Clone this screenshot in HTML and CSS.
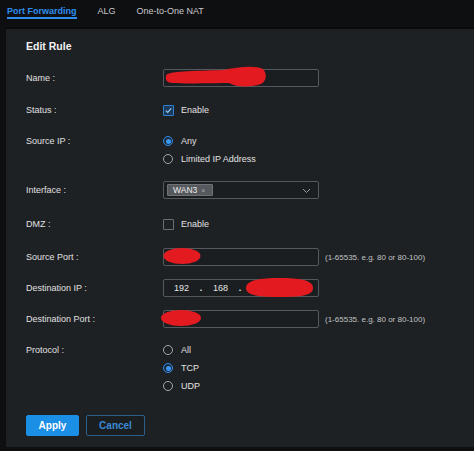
FILE: index.html
```html
<!DOCTYPE html>
<html>
<head>
<meta charset="utf-8">
<link rel="stylesheet" href="styles.css">
</head>
<body>
<nav class="tabs">
  <span class="tab active">Port Forwarding</span>
  <span class="tab">ALG</span>
  <span class="tab">One-to-One NAT</span>
</nav>
<section class="panel">
  <h1 class="title">Edit Rule</h1>
  <div class="form">
    <div class="row">
      <div class="label">Name :</div>
      <div class="field input">
        <svg class="redact" width="156" height="18" viewBox="0 0 156 18"><path d="M3 7 C3 2 30 2 60 1 C75 -2 92 -4 100 0 C104 4 104 12 98 15 C90 18 74 19 66 14 C50 14 25 15 10 14 C4 14 2 11 3 7Z" fill="#e31b20"/></svg>
      </div>
    </div>
    <div class="row row-status">
      <div class="label">Status :</div>
      <label class="opt"><span class="check on"><svg width="9" height="9" viewBox="0 0 9 9"><path d="M1.8 4.6 L3.7 6.4 L7.2 2.4" fill="none" stroke="#8fc6f6" stroke-width="1.3"/></svg></span>Enable</label>
    </div>
    <div class="row row-multi">
      <div class="label">Source IP :</div>
      <div class="opts">
        <label class="opt"><span class="radio on"></span>Any</label>
        <label class="opt"><span class="radio"></span>Limited IP Address</label>
      </div>
    </div>
    <div class="row">
      <div class="label">Interface :</div>
      <div class="field input select">
        <span class="tag">WAN3<span class="tag-x">×</span></span>
        <svg class="chev" width="9" height="6" viewBox="0 0 9 6"><path d="M1 1 L4.5 4.5 L8 1" fill="none" stroke="#9a9da1" stroke-width="1"/></svg>
      </div>
    </div>
    <div class="row row-dmz">
      <div class="label">DMZ :</div>
      <label class="opt"><span class="check"></span>Enable</label>
    </div>
    <div class="row row-sport">
      <div class="label">Source Port :</div>
      <div class="field input">
        <svg class="redact" width="156" height="18" viewBox="0 0 156 18"><ellipse cx="19" cy="8" rx="18.5" ry="8" fill="#e31b20"/></svg>
      </div>
      <div class="hint">(1-65535. e.g. 80 or 80-100)</div>
    </div>
    <div class="row">
      <div class="label">Destination IP :</div>
      <div class="field input ip">
        <span class="seg">192</span><span class="dot">.</span><span class="seg">168</span><span class="dot">.</span>
        <svg class="redact" width="156" height="18" viewBox="0 0 156 18"><path d="M83 9 C83 1 98 -1 116 -1 C136 -1 150 1 150 9 C150 17 136 18 116 18 C98 18 83 17 83 9Z" fill="#e31b20"/></svg>
      </div>
    </div>
    <div class="row">
      <div class="label">Destination Port :</div>
      <div class="field input">
        <svg class="redact" width="156" height="18" viewBox="0 0 156 18"><ellipse cx="18" cy="8" rx="20" ry="8" fill="#e31b20"/></svg>
      </div>
      <div class="hint">(1-65535. e.g. 80 or 80-100)</div>
    </div>
    <div class="row row-multi">
      <div class="label">Protocol :</div>
      <div class="opts">
        <label class="opt"><span class="radio"></span>All</label>
        <label class="opt"><span class="radio on"></span>TCP</label>
        <label class="opt"><span class="radio"></span>UDP</label>
      </div>
    </div>
    <div class="actions">
      <button class="btn primary">Apply</button>
      <button class="btn ghost">Cancel</button>
    </div>
  </div>
</section>
</body>
</html>
```

FILE: styles.css
```css
* { box-sizing: border-box; }
html, body { margin: 0; padding: 0; }
body {
  background: #0e0f11;
  font-family: "Liberation Sans", Arial, sans-serif;
  color: #dcdcdc;
  width: 474px;
  height: 451px;
  overflow: hidden;
}
.tabs {
  display: flex;
  gap: 21px;
  padding-left: 7px;
  height: 27px;
}
.tab {
  font-size: 9px;
  line-height: 11px;
  padding-top: 6px;
  height: 19px;
  color: #c9cacc;
  border-bottom: 2px solid transparent;
}
.tab.active {
  color: #2f8ff0;
  font-weight: bold;
  border-bottom-color: #2f8ff0;
}
.panel {
  margin-left: 6px;
  height: 420px;
  background: #1e2124;
  border-top: 2px solid #0a0b0c;
  padding: 10px 0 0 20px;
}
.title {
  margin: 0 0 16px 0;
  font-size: 10.5px;
  line-height: 14px;
  font-weight: bold;
  color: #f2f2f2;
}
.form {
  display: flex;
  flex-direction: column;
  gap: 13px;
}
.row {
  display: grid;
  grid-template-columns: 137px 156px auto;
  align-items: center;
  min-height: 18px;
}
.row-multi { align-items: start; }
.row-status { margin-top: 1px; }
.row-dmz { margin-top: 3px; }
.row-sport { margin-top: 2px; }
.label {
  font-size: 9px;
  line-height: 18px;
  color: #e0e0e0;
}
.field { position: relative; }
.input {
  height: 18px;
  border: 1px solid #55585d;
  border-radius: 2px;
  background: #1b1e21;
}
.redact {
  position: absolute;
  left: -1px;
  top: -1px;
  overflow: visible;
}
.hint {
  font-size: 8px;
  color: #c0c1c3;
  padding-left: 6px;
  white-space: nowrap;
}
.opts { display: flex; flex-direction: column; }
.opt {
  display: flex;
  align-items: center;
  height: 18px;
  font-size: 9px;
  color: #e2e2e2;
}
.check {
  width: 11px;
  height: 11px;
  border: 1px solid #6b6e72;
  border-radius: 1px;
  margin-right: 7px;
  display: flex;
  align-items: center;
  justify-content: center;
}
.check.on {
  border-color: #2f82d2;
  background: #1c3a57;
}
.radio {
  width: 10px;
  height: 10px;
  border-radius: 50%;
  border: 1px solid #a3a5a8;
  margin-right: 8px;
  display: flex;
  align-items: center;
  justify-content: center;
}
.radio.on {
  border-color: #2f8ff0;
  background: #1e2a38;
}
.radio.on::after {
  content: "";
  width: 5px;
  height: 5px;
  border-radius: 50%;
  background: #3a98f5;
}
.select {
  display: flex;
  align-items: center;
  padding-left: 3px;
}
.tag {
  display: flex;
  align-items: center;
  height: 12px;
  width: 46px;
  padding-left: 5px;
  background: #55585c;
  border: 1px solid #6e7175;
  border-radius: 1px;
  font-size: 8.5px;
  color: #eeeeee;
}
.tag-x {
  font-size: 7px;
  color: #a8aaad;
  margin-left: 4px;
}
.chev {
  position: absolute;
  right: 7px;
  top: 6px;
}
.ip {
  display: flex;
  align-items: center;
  font-size: 9px;
  color: #e6e6e6;
}
.seg {
  width: 35px;
  text-align: center;
}
.dot {
  width: 4px;
  text-align: center;
  font-weight: bold;
}
.actions {
  display: flex;
  gap: 7px;
  margin-top: 7px;
}
.btn {
  height: 21px;
  border-radius: 2px;
  font-family: "Liberation Sans", Arial, sans-serif;
  font-size: 10px;
  font-weight: bold;
  padding: 0;
}
.primary {
  width: 53px;
  background: #1b8fe6;
  border: 1px solid #1b8fe6;
  color: #ffffff;
}
.ghost {
  width: 59px;
  background: #1b1e21;
  border: 1px solid #2c5f8c;
  color: #3a8ad4;
}
```
